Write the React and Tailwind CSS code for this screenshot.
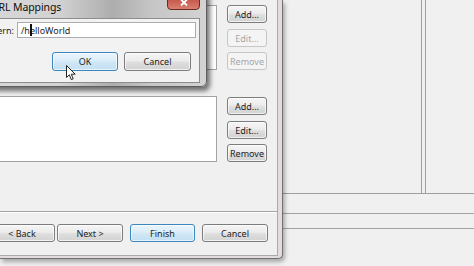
import React from "react";

const font = { fontFamily: '"Noto Sans", "Open Sans", sans-serif' };

function Btn({ children, kind = "normal", className = "" }) {
  const base =
    "flex items-center justify-center rounded-[3px] border text-[9px] leading-none shrink-0 ";
  const styles = {
    normal:
      "border-[#7c7c7c] text-[#1e1e1e] bg-[linear-gradient(180deg,#f5f5f5_0%,#ececec_45%,#dedede_55%,#d2d2d2_100%)] shadow-[inset_0_0_0_1px_rgba(255,255,255,0.7)]",
    disabled: "border-[#c6c6c6] text-[#a6a6a6] bg-[#f4f4f4]",
    focus:
      "border-[#3d86bd] text-[#1e1e1e] bg-[linear-gradient(180deg,#eaf5fc_0%,#dcedf8_45%,#cfe6f5_55%,#c4e0f2_100%)] shadow-[inset_0_0_0_1px_rgba(255,255,255,0.6)]",
  };
  return <div className={base + styles[kind] + " " + className}>{children}</div>;
}

export default function App() {
  return (
    <div
      className="relative w-[474px] h-[266px] overflow-hidden bg-[#f0f0f0] flex"
      style={font}
    >
      {/* Wizard window */}
      <div className="relative z-10 w-[283px] h-[259px] shrink-0 flex border-r border-b border-[#707070] rounded-br-[5px] bg-[#e2dcdc] pr-[4px] pb-[2px] shadow-[2px_3px_4px_rgba(0,0,0,0.3)]">
        <div className="flex-1 min-w-0 flex flex-col border-r border-b border-[#a9a9a9] bg-[#f0f0f0]">
          {/* Row 1 */}
          <div className="flex items-start gap-[10px] pr-[10px] pt-[5px]">
            <div className="flex-1 min-w-0 h-[65px] bg-white border border-l-0 border-[#a3a3a3]" />
            <div className="w-[40px] shrink-0 flex flex-col">
              <Btn className="h-[18px]">Add...</Btn>
              <Btn kind="disabled" className="h-[18px] mt-[6px]">Edit...</Btn>
              <Btn kind="disabled" className="h-[18px] mt-[5px]">Remove</Btn>
            </div>
          </div>
          {/* Row 2 */}
          <div className="flex items-start gap-[10px] pr-[10px] mt-[26px]">
            <div className="flex-1 min-w-0 h-[66px] bg-white border border-l-0 border-[#a3a3a3]" />
            <div className="w-[40px] shrink-0 flex flex-col pt-[1px]">
              <Btn className="h-[18px]">Add...</Btn>
              <Btn className="h-[18px] mt-[6px]">Edit...</Btn>
              <Btn className="h-[18px] mt-[5px]">Remove</Btn>
            </div>
          </div>
          {/* separator */}
          <div className="mt-[49px] h-px bg-[#a5a5a5]" />
          <div className="h-px bg-white" />
          {/* Bottom buttons */}
          <div className="mt-[11px] min-w-0 flex justify-end pr-[9px]">
            <Btn className="w-[66px] h-[18px] mr-[2px]">&lt; Back</Btn>
            <Btn className="w-[66px] h-[18px] mr-[7px]">Next &gt;</Btn>
            <Btn kind="focus" className="w-[65px] h-[18px] mr-[7px]">Finish</Btn>
            <Btn className="w-[66px] h-[18px]">Cancel</Btn>
          </div>
        </div>
      </div>

      {/* Right pane */}
      <div className="flex-1 min-w-0 flex flex-col">
        <div className="h-[194px] flex gap-[3px] border-b border-[#9e9e9e]">
          <div className="w-[139px] shrink-0 border-r border-[#9e9e9e]" />
          <div className="flex-1 border-l border-[#9e9e9e]" />
        </div>
        <div className="mt-[19px] h-px bg-[#a3a3a3]" />
        <div className="mt-[14px] h-px bg-[#a3a3a3]" />
      </div>

      {/* URL Mappings dialog */}
      <div className="absolute z-20 left-[-40px] top-[-10px] w-[247px] h-[97px] flex flex-col rounded-[6px] border border-[#5e5e5e] bg-[linear-gradient(90deg,#d9d9d9_0%,#d2d2d2_40%,#adadad_62%,#c6c6c6_78%,#d3d3d3_100%)] shadow-[3px_4px_5px_rgba(0,0,0,0.55)]">
        <div className="relative h-[27px] shrink-0 pl-[30px] pt-[10px]">
          <span className="block text-[10.5px] leading-[12px] tracking-[-0.1px] text-[#0e0e0e]">
            URL Mappings
          </span>
          <div className="absolute left-[206px] top-[-1px] w-[33px] h-[20px] rounded-b-[4px] border border-[#6b2b25] bg-[linear-gradient(180deg,#b94a3f_0%,#c75a4e_50%,#d98070_100%)] flex items-end justify-center pb-[3px]">
            <svg width="8" height="7" viewBox="0 0 8 7">
              <path d="M1 0.5 L7 6.5 M7 0.5 L1 6.5" stroke="#fff" strokeWidth="1.8" />
            </svg>
          </div>
        </div>
        <div className="h-[65px] mr-[6px] border border-[#8d8d8d] bg-[#f2f2f2] flex flex-col">
          <div className="flex items-center mt-[3px] pr-[3px]">
            <div className="w-[52px] shrink-0 text-right text-[9px] leading-none text-[#1e1e1e]">
              Pattern:
            </div>
            <div className="relative ml-[3px] flex-1 h-[16px] bg-white border border-[#abadb3] flex items-center pl-[3px] text-[9px] leading-none text-[#1e1e1e]">
              /helloWorld
              <div className="absolute left-[12px] top-[1px] w-[1.5px] h-[12px] bg-[#111]" />
            </div>
          </div>
          <div className="flex justify-end pr-[8px] mt-[14px]">
            <Btn kind="focus" className="w-[66px] h-[19px] mr-[6px]">OK</Btn>
            <Btn className="w-[67px] h-[19px]">Cancel</Btn>
          </div>
        </div>
      </div>

      {/* Mouse cursor */}
      <svg
        className="absolute z-30 left-[66px] top-[65px]"
        width="11"
        height="16"
        viewBox="0 0 11 16"
      >
        <path
          d="M0.5 0.5 L0.5 12.5 L3.3 9.8 L5.3 14.6 L7.2 13.8 L5.3 9.2 L9.2 9.2 Z"
          fill="#fff"
          stroke="#222"
          strokeWidth="1"
          strokeLinejoin="round"
        />
      </svg>
    </div>
  );
}
